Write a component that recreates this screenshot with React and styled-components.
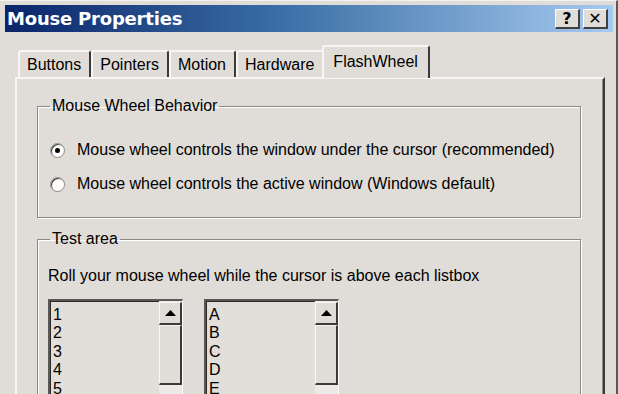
import React from "react";
import styled, { createGlobalStyle } from "styled-components";

const Global = createGlobalStyle`
  html, body {
    margin: 0;
    padding: 0;
    background: #e0dcd7;
    overflow: hidden;
  }
  * { box-sizing: border-box; }
`;

const Window = styled.div`
  width: 618px;
  height: 394px;
  background: #e0dcd7;
  font-family: "Liberation Sans", Arial, sans-serif;
  font-size: 16px;
  color: #000;
  padding: 4px 3px 0 5px;
  border-top: 1px solid #f4f2f0;
  border-right: 2px solid #5a5855;
  overflow: hidden;
  display: flex;
  flex-direction: column;
`;

const TitleBar = styled.div`
  height: 27px;
  flex: none;
  display: flex;
  align-items: center;
  padding: 0 5px 0 2px;
  background: linear-gradient(90deg, #0a246a 0%, #3a6ea5 45%, #a6caf0 100%);
`;

const Title = styled.div`
  flex: 1;
  color: #fff;
  font-family: "DejaVu Sans", "Liberation Sans", sans-serif;
  font-weight: bold;
  font-size: 18px;
  letter-spacing: -0.2px;
`;

const CapButton = styled.div`
  width: 25px;
  height: 20px;
  margin-left: ${({ gap }) => gap || 0}px;
  background: #e0dcd7;
  border-top: 1px solid #fff;
  border-left: 1px solid #fff;
  border-right: 2px solid #404040;
  border-bottom: 2px solid #404040;
  display: flex;
  align-items: center;
  justify-content: center;
  font-weight: bold;
  font-family: "DejaVu Sans", sans-serif;
  font-size: 16px;
`;

const Body = styled.div`
  flex: 1;
  padding: 13px 8px 0 10px;
  display: flex;
  flex-direction: column;
`;

const TabRow = styled.div`
  display: flex;
  align-items: flex-end;
  height: 32px;
  flex: none;
  padding-left: 3px;
  position: relative;
  z-index: 1;
`;

const Tab = styled.div`
  height: ${({ active }) => (active ? 33 : 27)}px;
  padding: 0 ${({ active }) => (active ? 10 : 8)}px 0
    ${({ active }) => (active ? 9 : 7)}px;
  margin: 0 ${({ active }) => (active ? -2 : 0)}px
    ${({ active }) => (active ? -1 : 0)}px;
  border-top: 2px solid #f8f6f4;
  border-left: 2px solid #f8f6f4;
  border-right: 2px solid #3c3a38;
  border-radius: 3px 3px 0 0;
  background: #e0dcd7;
  display: flex;
  align-items: center;
  padding-bottom: ${({ active }) => (active ? 2 : 0)}px;
`;

const Panel = styled.div`
  flex: 1;
  border-top: 2px solid #f8f6f4;
  border-left: 2px solid #f8f6f4;
  border-right: 2px solid #3c3a38;
  box-shadow: inset -1px 0 0 #8c8985;
  padding: 18px 22px 0 20px;
  display: flex;
  flex-direction: column;
  gap: 12px;
`;

const Group = styled.fieldset`
  margin: 0;
  padding: ${({ pad }) => pad};
  border: 1px solid #8c8985;
  box-shadow: 1px 1px 0 #fff, inset 1px 1px 0 #fff;
  height: ${({ h }) => (h ? `${h}px` : "auto")};
  min-width: 0;
  flex: none;
`;

const Legend = styled.legend`
  margin-left: 2px;
  padding: 0 2px;
`;

const RadioRow = styled.label`
  display: flex;
  align-items: center;
  gap: 12px;
  height: 34px;
  padding-left: 2px;
`;

const RadioDot = styled.span`
  width: 15px;
  height: 15px;
  border-radius: 50%;
  flex: none;
  background: #fff;
  border: 1px solid #8c8985;
  box-shadow: inset 1px 1px 0 #404040;
  display: flex;
  align-items: center;
  justify-content: center;
  &::after {
    content: "";
    width: 5px;
    height: 5px;
    border-radius: 50%;
    background: ${({ checked }) => (checked ? "#000" : "transparent")};
  }
`;

const Hint = styled.div`
  margin-top: 18px;
  line-height: 20px;
`;

const ListRow = styled.div`
  display: flex;
  gap: 21px;
  margin-top: 13px;
`;

const ListBox = styled.div`
  width: 135px;
  height: 120px;
  display: flex;
  border-top: 2px solid #5a5855;
  border-left: 2px solid #5a5855;
  border-right: 1px solid #fff;
  border-bottom: 1px solid #fff;
  box-shadow: inset 1px 1px 0 #2a2a2a;
  background: #e2ded9;
`;

const Items = styled.div`
  flex: 1;
  padding: 5px 0 0 3px;
  line-height: 18.4px;
`;

const ScrollBar = styled.div`
  width: 23px;
  display: flex;
  flex-direction: column;
  background: #eceae6;
`;

const ArrowBtn = styled.div`
  height: 23px;
  margin-top: 1px;
  background: #e0dcd7;
  border-top: 1px solid #f8f6f4;
  border-left: 1px solid #f8f6f4;
  border-right: 2px solid #3c3a38;
  border-bottom: 2px solid #3c3a38;
  display: flex;
  align-items: center;
  justify-content: center;
`;

const Thumb = styled.div`
  height: 60px;
  background: #e0dcd7;
  border-top: 1px solid #f8f6f4;
  border-left: 1px solid #f8f6f4;
  border-right: 2px solid #3c3a38;
  border-bottom: 2px solid #3c3a38;
`;

const UpArrow = () => (
  <svg width="11" height="7" viewBox="0 0 11 7">
    <path d="M5.5 0 L11 6 L0 6 Z" fill="#000" />
  </svg>
);

const List = ({ items }) => (
  <ListBox>
    <Items>
      {items.map((i) => (
        <div key={i}>{i}</div>
      ))}
    </Items>
    <ScrollBar>
      <ArrowBtn>
        <UpArrow />
      </ArrowBtn>
      <Thumb />
    </ScrollBar>
  </ListBox>
);

export default function App() {
  const tabs = ["Buttons", "Pointers", "Motion", "Hardware", "FlashWheel"];
  return (
    <>
      <Global />
      <Window>
        <TitleBar>
          <Title>Mouse Properties</Title>
          <CapButton>?</CapButton>
          <CapButton gap={3}>✕</CapButton>
        </TitleBar>
        <Body>
          <TabRow>
            {tabs.map((t) => (
              <Tab key={t} active={t === "FlashWheel"}>
                {t}
              </Tab>
            ))}
          </TabRow>
          <Panel>
            <Group pad="18px 10px 12px 10px" h={121}>
              <Legend>Mouse Wheel Behavior</Legend>
              <RadioRow>
                <RadioDot checked />
                Mouse wheel controls the window under the cursor (recommended)
              </RadioRow>
              <RadioRow>
                <RadioDot />
                Mouse wheel controls the active window (Windows default)
              </RadioRow>
            </Group>
            <Group pad="0 10px 0 10px">
              <Legend>Test area</Legend>
              <Hint>Roll your mouse wheel while the cursor is above each listbox</Hint>
              <ListRow>
                <List items={["1", "2", "3", "4", "5"]} />
                <List items={["A", "B", "C", "D", "E"]} />
              </ListRow>
            </Group>
          </Panel>
        </Body>
      </Window>
    </>
  );
}
